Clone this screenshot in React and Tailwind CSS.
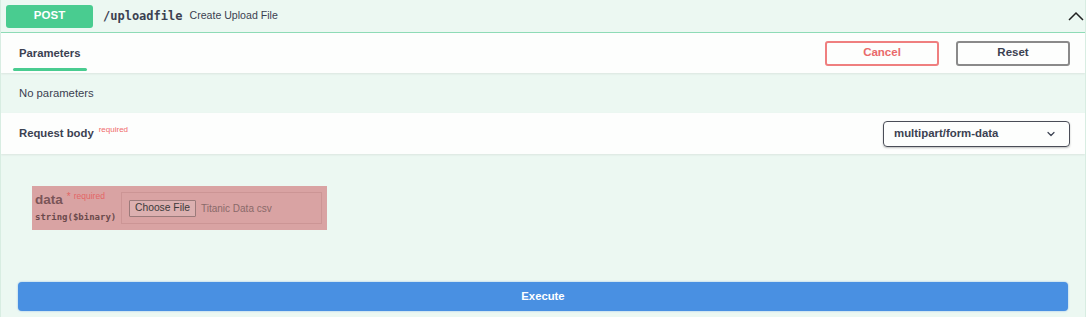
import { ChevronDown } from "lucide-react";

const sans = { fontFamily: '"Liberation Sans", Arial, sans-serif' };
const mono = { fontFamily: '"DejaVu Sans Mono", monospace' };

const App = () => {
  return (
    <div className="w-[1086px] h-[317px] bg-[#ecf8f2] text-[#3b4151] overflow-hidden border-x border-[#d8ede2]" style={sans}>
      {/* summary */}
      <div className="h-[33px] flex items-center border-b border-[#8fdcb7] pl-[5px] pr-[1px]">
        <span className="w-[87px] h-[23px] rounded-[3px] bg-[#49cc90] text-white font-bold text-[11.5px] flex items-center justify-center">
          POST
        </span>
        <span className="ml-[10px] font-bold text-[12px] text-[#3b4151]" style={mono}>
          /uploadfile
        </span>
        <span className="ml-[7px] text-[10.6px] text-[#3b4151]">Create Upload File</span>
        <svg className="ml-auto" width="16" height="10" viewBox="0 0 16 10" fill="none">
          <polyline points="1,9 8,2 15,9" stroke="#222" strokeWidth="1.5" />
        </svg>
      </div>

      {/* parameters header */}
      <div className="h-[40px] bg-[#fdfefd] flex items-center pl-[12px] pr-[15px] shadow-[0_1px_2px_rgba(0,0,0,0.08)]">
        <div className="relative h-full flex items-center px-[6px]">
          <span className="font-bold text-[11.3px]">Parameters</span>
          <span className="absolute left-0 right-0 bottom-[2px] h-[3px] rounded bg-[#49cc90]" />
        </div>
        <div className="ml-auto flex gap-[17px]">
          <button className="w-[114px] h-[25px] rounded-[3px] border-2 border-[#ef7f7f] text-[#e96a6a] font-bold text-[11.5px] bg-transparent">
            Cancel
          </button>
          <button className="w-[114px] h-[25px] rounded-[3px] border-2 border-[#8a8a8a] text-[#3b4151] font-bold text-[11.5px] bg-transparent">
            Reset
          </button>
        </div>
      </div>

      {/* no parameters */}
      <div className="h-[40px] flex items-center px-[18px] text-[11.3px]">No parameters</div>

      {/* request body header */}
      <div className="h-[41px] bg-[#fdfefd] flex items-center pl-[18px] pr-[15px] shadow-[0_1px_2px_rgba(0,0,0,0.08)]">
        <span className="font-bold text-[11.3px]">Request body</span>
        <span className="ml-[5px] self-start mt-[11px] text-[8px] text-[#f06a6a]">required</span>
        <div className="ml-auto w-[187px] h-[26px] rounded-[4px] border border-[#4a4d57] flex items-center justify-between pl-[10px] pr-[12px] shadow-[0_1px_2px_rgba(0,0,0,0.25)]">
          <span className="font-bold text-[11.4px]">multipart/form-data</span>
          <ChevronDown className="w-[12px] h-[12px]" strokeWidth={2.4} />
        </div>
      </div>

      {/* body */}
      <div className="pt-[32px] px-[17px]">
        <div className="ml-[14px] w-[295px] h-[44px] bg-[#d9a3a3] flex items-center pl-[3px] pr-[5px]">
          <div className="flex flex-col w-[85px]">
            <div className="flex items-start">
              <span className="text-[13.5px] text-[#7b5558] font-bold leading-[18px]">data</span>
              <span className="ml-[4px] text-[#e36666] text-[10px] leading-[12px]">*</span>
              <span className="ml-[3px] text-[#e36666] text-[8.5px] leading-[10px]">required</span>
            </div>
            <span className="text-[9px] font-bold text-[#6b4a4c] mt-[2px]" style={mono}>
              string($binary)
            </span>
          </div>
          <div className="ml-auto w-[201px] h-[32px] border border-[#cc9595] flex items-center pl-[7px]">
            <span className="h-[17px] px-[5px] border border-[#9b7a7a] bg-[#dcb0b0] text-[10.3px] text-[#3b3b3b] flex items-center rounded-[1px]">
              Choose File
            </span>
            <span className="ml-[5px] text-[10px] text-[#8a6a6a]">Titanic Data csv</span>
          </div>
        </div>

        <button className="mt-[52px] w-full h-[29px] rounded-[4px] bg-[#4990e2] text-white font-bold text-[11.3px] shadow-[0_0_2px_rgba(73,144,226,0.6)]">
          Execute
        </button>
      </div>
    </div>
  );
};

export default App;
